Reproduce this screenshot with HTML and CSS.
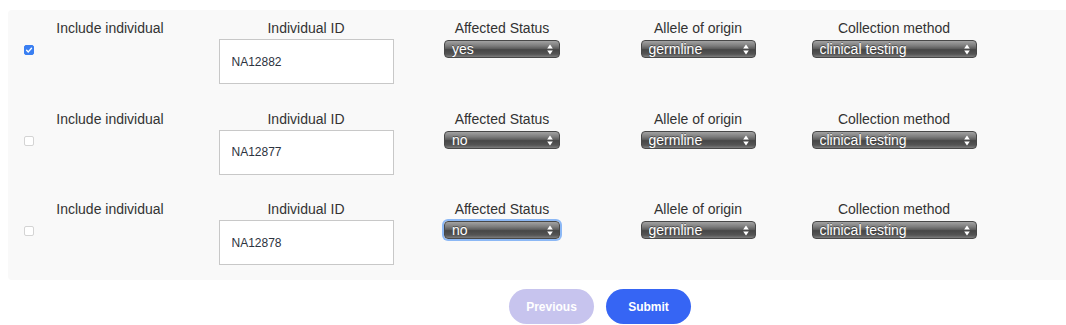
FILE: index.html
```html
<!DOCTYPE html>
<html lang="en">
<head>
  <meta charset="UTF-8">
  <meta name="viewport" content="width=device-width, initial-scale=1.0">
  <title>Individuals</title>
  <link rel="stylesheet" href="styles.css">
</head>
<body>
  <div class="panel">

    <!-- individual 1 -->
    <div class="row">
      <div class="field include">
        <label class="field-label">Include individual</label>
        <span class="check checked">
          <svg width="10" height="10" viewBox="0 0 10 10"><path d="M2.6 5.2 L4.3 6.9 L7.5 3.3" fill="none" stroke="#fff" stroke-width="1.4" stroke-linecap="round" stroke-linejoin="round"/></svg>
        </span>
      </div>
      <div class="field">
        <label class="field-label">Individual ID</label>
        <input type="text" class="id-input" value="NA12882">
      </div>
      <div class="field">
        <label class="field-label">Affected Status</label>
        <span class="select-wrap">
          <select class="aqua w-status"><option>yes</option><option>no</option><option>unknown</option></select>
          <svg class="arrows" width="6" height="11" viewBox="0 0 6 11"><path d="M3 0.5 L5.8 4.4 L0.2 4.4 Z M3 10.5 L5.8 6.6 L0.2 6.6 Z" fill="#fff"/></svg>
        </span>
      </div>
      <div class="field">
        <label class="field-label">Allele of origin</label>
        <span class="select-wrap">
          <select class="aqua w-allele"><option>germline</option><option>somatic</option></select>
          <svg class="arrows" width="6" height="11" viewBox="0 0 6 11"><path d="M3 0.5 L5.8 4.4 L0.2 4.4 Z M3 10.5 L5.8 6.6 L0.2 6.6 Z" fill="#fff"/></svg>
        </span>
      </div>
      <div class="field">
        <label class="field-label">Collection method</label>
        <span class="select-wrap">
          <select class="aqua w-method"><option>clinical testing</option><option>research</option></select>
          <svg class="arrows" width="6" height="11" viewBox="0 0 6 11"><path d="M3 0.5 L5.8 4.4 L0.2 4.4 Z M3 10.5 L5.8 6.6 L0.2 6.6 Z" fill="#fff"/></svg>
        </span>
      </div>
    </div>

    <!-- individual 2 -->
    <div class="row">
      <div class="field include">
        <label class="field-label">Include individual</label>
        <span class="check"></span>
      </div>
      <div class="field">
        <label class="field-label">Individual ID</label>
        <input type="text" class="id-input" value="NA12877">
      </div>
      <div class="field">
        <label class="field-label">Affected Status</label>
        <span class="select-wrap">
          <select class="aqua w-status"><option>no</option><option>yes</option><option>unknown</option></select>
          <svg class="arrows" width="6" height="11" viewBox="0 0 6 11"><path d="M3 0.5 L5.8 4.4 L0.2 4.4 Z M3 10.5 L5.8 6.6 L0.2 6.6 Z" fill="#fff"/></svg>
        </span>
      </div>
      <div class="field">
        <label class="field-label">Allele of origin</label>
        <span class="select-wrap">
          <select class="aqua w-allele"><option>germline</option><option>somatic</option></select>
          <svg class="arrows" width="6" height="11" viewBox="0 0 6 11"><path d="M3 0.5 L5.8 4.4 L0.2 4.4 Z M3 10.5 L5.8 6.6 L0.2 6.6 Z" fill="#fff"/></svg>
        </span>
      </div>
      <div class="field">
        <label class="field-label">Collection method</label>
        <span class="select-wrap">
          <select class="aqua w-method"><option>clinical testing</option><option>research</option></select>
          <svg class="arrows" width="6" height="11" viewBox="0 0 6 11"><path d="M3 0.5 L5.8 4.4 L0.2 4.4 Z M3 10.5 L5.8 6.6 L0.2 6.6 Z" fill="#fff"/></svg>
        </span>
      </div>
    </div>

    <!-- individual 3 -->
    <div class="row">
      <div class="field include">
        <label class="field-label">Include individual</label>
        <span class="check"></span>
      </div>
      <div class="field">
        <label class="field-label">Individual ID</label>
        <input type="text" class="id-input" value="NA12878">
      </div>
      <div class="field">
        <label class="field-label">Affected Status</label>
        <span class="select-wrap">
          <select class="aqua w-status focused"><option>no</option><option>yes</option><option>unknown</option></select>
          <svg class="arrows" width="6" height="11" viewBox="0 0 6 11"><path d="M3 0.5 L5.8 4.4 L0.2 4.4 Z M3 10.5 L5.8 6.6 L0.2 6.6 Z" fill="#fff"/></svg>
        </span>
      </div>
      <div class="field">
        <label class="field-label">Allele of origin</label>
        <span class="select-wrap">
          <select class="aqua w-allele"><option>germline</option><option>somatic</option></select>
          <svg class="arrows" width="6" height="11" viewBox="0 0 6 11"><path d="M3 0.5 L5.8 4.4 L0.2 4.4 Z M3 10.5 L5.8 6.6 L0.2 6.6 Z" fill="#fff"/></svg>
        </span>
      </div>
      <div class="field">
        <label class="field-label">Collection method</label>
        <span class="select-wrap">
          <select class="aqua w-method"><option>clinical testing</option><option>research</option></select>
          <svg class="arrows" width="6" height="11" viewBox="0 0 6 11"><path d="M3 0.5 L5.8 4.4 L0.2 4.4 Z M3 10.5 L5.8 6.6 L0.2 6.6 Z" fill="#fff"/></svg>
        </span>
      </div>
    </div>

  </div>

  <!-- buttons sit on the line between the 3rd and 4th column -->
  <div class="actions">
    <button class="btn btn-prev" disabled>Previous</button>
    <button class="btn btn-submit">Submit</button>
  </div>
</body>
</html>
```

FILE: styles.css
```css
body {
  font-family: "Liberation Sans", Arial, sans-serif;
  margin: 10px 0 0 8px;
  padding: 0;
  background-color: #fff;
  color: #333;
}

.panel {
  background-color: #f9f9f9;
  border-radius: 4px 0 0 4px;
  padding: 10px 4px 15px;
  display: flex;
  flex-direction: column;
  gap: 26.5px;
}

.row,
.actions {
  display: grid;
  grid-template-columns: repeat(5, 196px);
}

.field {
  display: flex;
  flex-direction: column;
  align-items: center;
}

.field-label {
  font-size: 14px;
  line-height: 16px;
  color: #333;
  margin-bottom: 3px;
}

.include .check {
  align-self: flex-start;
  margin: 6px 0 0 12px;
}

.check {
  box-sizing: border-box;
  width: 10px;
  height: 10px;
  border: 1px solid #d4d4d4;
  border-radius: 2px;
  background-color: #fff;
}

.check svg {
  display: block;
  margin: -1px;
}

.check.checked {
  background-color: #3a7ff2;
  border-color: #3a7ff2;
}

.id-input {
  box-sizing: border-box;
  width: 175px;
  height: 45px;
  padding: 0 12px;
  border: 1px solid #c8c8c8;
  background-color: #fff;
  font-family: "Liberation Sans", Arial, sans-serif;
  font-size: 12px;
  color: #2d3340;
  outline: none;
}

.select-wrap {
  position: relative;
  display: inline-block;
  margin-top: 1px;
}

.aqua {
  -webkit-appearance: none;
  appearance: none;
  box-sizing: border-box;
  height: 18px;
  padding: 0 16px 0 7px;
  border: 1px solid #484848;
  border-radius: 4px;
  background: linear-gradient(#a2a2a2 0%, #7c7c7c 30%, #5c5c5c 48%, #464646 54%, #555 82%, #7e7e7e 100%);
  font-family: "Liberation Sans", Arial, sans-serif;
  font-size: 14px;
  line-height: 16px;
  color: #fff;
  text-shadow: 0 -1px 0 rgba(0, 0, 0, 0.4);
  outline: none;
  display: block;
}

.aqua.focused {
  box-shadow: 0 0 0 2px #8cb8f5;
}

.w-status { width: 116px; }
.w-allele { width: 115px; }
.w-method { width: 165px; }

.arrows {
  position: absolute;
  right: 7px;
  top: 4px;
  pointer-events: none;
}

.actions {
  padding: 0 4px;
  margin-top: 9px;
}

.btn {
  width: 85px;
  height: 35px;
  border: none;
  border-radius: 18px;
  font-family: "Liberation Sans", Arial, sans-serif;
  font-size: 12px;
  font-weight: bold;
  color: #fff;
  cursor: pointer;
}

.btn-prev {
  grid-column: 3;
  justify-self: end;
  margin-right: 6px;
  background-color: #c7c4ee;
}

.btn-submit {
  grid-column: 4;
  justify-self: start;
  margin-left: 6px;
  background-color: #3665f4;
}
```
